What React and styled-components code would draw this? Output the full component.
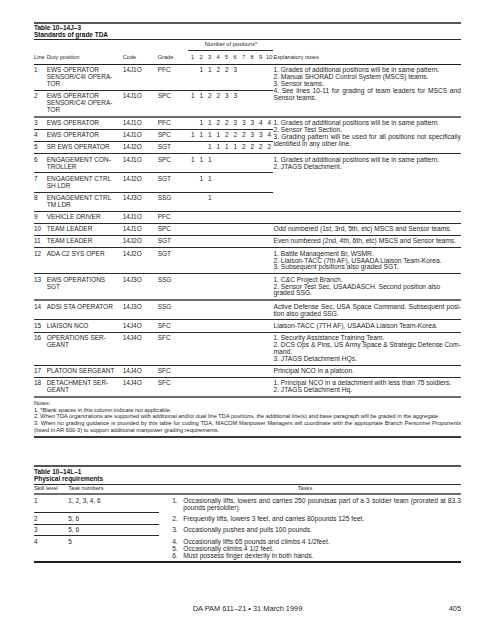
import React from 'react';
import styled, { createGlobalStyle } from 'styled-components';

const GlobalStyle = createGlobalStyle`
  html, body { margin: 0; padding: 0; background: #fff; }
  body {
    font-family: "Liberation Sans", Arial, Helvetica, sans-serif;
    color: #1e1e1e;
  }
`;

// Line | Duty position | Code | Grade | positions 1..10
const COLS = '12.7px 76px 35px 30.75px repeat(10, 8.5px)';
const THIN = '1px solid #2a2a2a';
const THICK = '2px solid #6e6e6e';

const duty1 = 'EWS OPERATOR\nSENSOR/C4I OPERA-\nTOR';

const groups = [
  {
    thick: true,
    rows: [
      { n: 1, duty: duty1, code: '14J1O', grade: 'PFC', pos: [null, 1, 1, 2, 2, 3] },
      { n: 2, duty: duty1, code: '14J1O', grade: 'SPC', pos: [1, 1, 2, 2, 3, 3] },
    ],
    notes: [
      { t: '1. Grades of additional positions will be in same pattern.' },
      { t: '2. Manual SHORAD Control System (MSCS) teams.' },
      { t: '3. Sensor teams.' },
      { t: '4. See lines 10-11 for grading of team leaders for MSCS and', j: true },
      { t: 'Sensor teams.' },
    ],
  },
  {
    rows: [
      { n: 3, duty: 'EWS OPERATOR', code: '14J1O', grade: 'PFC', pos: [null, 1, 1, 2, 2, 3, 3, 3, 4, 4] },
      { n: 4, duty: 'EWS OPERATOR', code: '14J1O', grade: 'SPC', pos: [1, 1, 1, 1, 2, 2, 2, 3, 3, 4] },
      { n: 5, duty: 'SR EWS OPERATOR', code: '14J2O', grade: 'SGT', pos: [null, null, 1, 1, 1, 1, 2, 2, 2, 2] },
    ],
    notes: [
      { t: '1. Grades of additional positions will be in same pattern.' },
      { t: '2. Sensor Test Section.' },
      { t: '3. Grading pattern will be used for all positions not specifically', j: true },
      { t: 'identified in any other line.' },
    ],
  },
  {
    rows: [
      { n: 6, duty: 'ENGAGEMENT CON-\nTROLLER', code: '14J1O', grade: 'SPC', pos: [1, 1, 1] },
      { n: 7, duty: 'ENGAGEMENT CTRL\nSH LDR', code: '14J2O', grade: 'SGT', pos: [null, 1, 1] },
      { n: 8, duty: 'ENGAGEMENT CTRL\nTM LDR', code: '14J3O', grade: 'SSG', pos: [null, null, 1] },
    ],
    notes: [
      { t: '1. Grades of additional positions will be in same pattern.' },
      { t: '2. JTAGS Detachment.' },
    ],
  },
  { rows: [{ n: 9, duty: 'VEHICLE DRIVER', code: '14J1O', grade: 'PFC' }], notes: [] },
  {
    rows: [{ n: 10, duty: 'TEAM LEADER', code: '14J1O', grade: 'SPC' }],
    notes: [{ t: 'Odd numbered (1st, 3rd, 5th, etc) MSCS and Sensor teams.' }],
  },
  {
    rows: [{ n: 11, duty: 'TEAM LEADER', code: '14J2O', grade: 'SGT' }],
    notes: [{ t: 'Even numbered (2nd, 4th, 6th, etc) MSCS and Sensor teams.' }],
  },
  {
    rows: [{ n: 12, duty: 'ADA C2 SYS OPER', code: '14J2O', grade: 'SGT' }],
    notes: [
      { t: '1. Battle Management Br, WSMR.' },
      { t: '2. Liaison-TACC (7th AF), USAADA Liaison Team-Korea.' },
      { t: '3. Subsequent positions also graded SGT.' },
    ],
  },
  {
    thick: true,
    rows: [{ n: 13, duty: 'EWS OPERATIONS\nSGT', code: '14J3O', grade: 'SSG' }],
    notes: [
      { t: '1. C&C Project Branch.' },
      { t: '2. Sensor Test Sec, USAADASCH. Second position also' },
      { t: 'graded SSG.' },
    ],
  },
  {
    rows: [{ n: 14, duty: 'ADSI STA OPERATOR', code: '14J3O', grade: 'SSG' }],
    notes: [
      { t: 'Active Defense Sec, USA Space Command. Subsequent posi-', j: true },
      { t: 'tion also graded SSG.' },
    ],
  },
  {
    rows: [{ n: 15, duty: 'LIAISON NCO', code: '14J4O', grade: 'SFC' }],
    notes: [{ t: 'Liaison-TACC (7TH AF), USAADA Liaison Team-Korea.' }],
  },
  {
    rows: [{ n: 16, duty: 'OPERATIONS SER-\nGEANT', code: '14J4O', grade: 'SFC' }],
    notes: [
      { t: '1. Security Assistance Training Team.' },
      { t: '2. DCS Ops & Plns, US Army Space & Strategic Defense Com-', j: true },
      { t: 'mand.' },
      { t: '3. JTAGS Detachment HQs.' },
    ],
  },
  {
    rows: [{ n: 17, duty: 'PLATOON SERGEANT', code: '14J4O', grade: 'SFC' }],
    notes: [{ t: 'Principal NCO in a platoon.' }],
  },
  {
    thick: true,
    rows: [{ n: 18, duty: 'DETACHMENT SER-\nGEANT', code: '14J4O', grade: 'SFC' }],
    notes: [
      { t: '1. Principal NCO in a detachment with less than 75 soldiers.' },
      { t: '2. JTAGS Detachment Hq.' },
    ],
  },
];

const footnotes = [
  { t: 'Notes:' },
  { t: '1. *Blank spaces in this column indicate not applicable.' },
  { t: '2. When TDA organizations are supported with additional and/or dual line TDA positions, the additional line(s) and base paragraph will be graded in the aggregate.' },
  { t: '3. When no grading guidance is provided by this table for coding TDA, MACOM Manpower Managers will coordinate with the appropriate Branch Personnel Proponents', j: true },
  { t: '(listed in AR 600-3) to support additional manpower grading requirements.' },
];

const physical = [
  {
    skill: '1',
    tasks: '1, 2, 3, 4, 6',
    items: [{ n: '1.', lines: [{ t: 'Occasionally lifts, lowers and carries 250 poundsas part of a 3 soldier team (prorated at 83.3', j: true }, { t: 'pounds persoldier).' }] }],
  },
  { skill: '2', tasks: '5, 6', items: [{ n: '2.', lines: [{ t: 'Frequently lifts, lowers 3 feet, and carries 80pounds 125 feet.' }] }] },
  { skill: '3', tasks: '5, 6', items: [{ n: '3.', lines: [{ t: 'Occasionally pushes and pulls 100 pounds.' }] }] },
  {
    skill: '4',
    tasks: '5',
    items: [
      { n: '4.', lines: [{ t: 'Occasionally lifts 65 pounds and climbs 4 1/2feet.' }] },
      { n: '5.', lines: [{ t: 'Occasionally climbs 4 1/2 feet.' }] },
      { n: '6.', lines: [{ t: 'Must possess finger dexterity in both hands.' }] },
    ],
  },
];

// a justified line is laid out word by word so it never wraps
const Line = ({ l }) =>
  l.j ? (
    <JustLine>
      {l.t.split(' ').map((w, i) => (
        <span key={i}>{w}</span>
      ))}
    </JustLine>
  ) : (
    <TextLine>{l.t}</TextLine>
  );

export default function App() {
  return (
    <Page>
      <GlobalStyle />

      <TableBlock>
        <Caption $pad="0.2px 0 1.6px">
          <div>Table 10–14J–3</div>
          <div>Standards of grade TDA</div>
        </Caption>

        <HeadGrid>
          <PosCaption>Number of positions*</PosCaption>
          <HeadLabel>Line</HeadLabel>
          <HeadLabel>Duty position</HeadLabel>
          <HeadLabel>Code</HeadLabel>
          <HeadLabel>Grade</HeadLabel>
          {Array.from({ length: 10 }, (_, i) => (
            <HeadLabel key={i} $center>{i + 1}</HeadLabel>
          ))}
          <HeadLabel>Explanatory notes</HeadLabel>
        </HeadGrid>

        {groups.map((g, gi) => (
          <Group key={gi} $thick={g.thick}>
            <Left>
              {g.rows.map((r) => (
                <Row key={r.n}>
                  <Cell>{r.n}</Cell>
                  <Duty>{r.duty}</Duty>
                  <Cell>{r.code}</Cell>
                  <Cell>{r.grade}</Cell>
                  {Array.from({ length: 10 }, (_, i) => (
                    <Pos key={i}>{r.pos && r.pos[i] != null ? r.pos[i] : ''}</Pos>
                  ))}
                </Row>
              ))}
            </Left>
            <Notes>
              {g.notes.map((l, i) => (
                <Line key={i} l={l} />
              ))}
            </Notes>
          </Group>
        ))}

        <Footnotes>
          {footnotes.map((l, i) => (
            <Line key={i} l={l} />
          ))}
        </Footnotes>
      </TableBlock>

      <TableBlock $gap="26.4px">
        <Caption $pad="1.4px 0 1.4px">
          <div>Table 10–14L–1</div>
          <div>Physical requirements</div>
        </Caption>

        <PhysHead>
          <span>Skill level</span>
          <span>Task numbers</span>
          <TasksLabel>Tasks</TasksLabel>
        </PhysHead>

        <PhysBody>
          {physical.map((r, ri) => {
            const last = ri === physical.length - 1;
            return (
              <PhysRow key={r.skill}>
                <PhysCell $last={last}>{r.skill}</PhysCell>
                <PhysCell $last={last}>{r.tasks}</PhysCell>
                <TaskCell>
                  {r.items.map((it) => (
                    <TaskItem key={it.n}>
                      <TaskNum>{it.n}</TaskNum>
                      <TaskText>
                        {it.lines.map((l, i) => (
                          <Line key={i} l={l} />
                        ))}
                      </TaskText>
                    </TaskItem>
                  ))}
                </TaskCell>
              </PhysRow>
            );
          })}
        </PhysBody>
      </TableBlock>

      <Footer>
        <span />
        <span>DA PAM 611–21 • 31 March 1999</span>
        <PageNo>405</PageNo>
      </Footer>
    </Page>
  );
}

const Page = styled.div`
  width: 427px;
  padding: 21.7px 34px 0;
`;

const TableBlock = styled.div`
  margin-top: ${(p) => p.$gap || '0'};
  border-top: 2px solid #555;
`;

const Caption = styled.div`
  font-weight: bold;
  font-size: 6.47px;
  line-height: 7px;
  padding: ${(p) => p.$pad};
  border-bottom: 1px solid #2a2a2a;
  color: #111;
`;

const HeadGrid = styled.div`
  display: grid;
  grid-template-columns: ${COLS} 1fr;
  font-size: 5.66px;
  line-height: 6.8px;
  padding-bottom: 2.6px;
  border-bottom: 1px solid #1e1e1e;
`;

const PosCaption = styled.div`
  grid-column: 5 / 15;
  grid-row: 1;
  text-align: center;
  padding: 0.9px 0 2.3px;
  border-bottom: 1px solid #2a2a2a;
`;

const HeadLabel = styled.div`
  grid-row: 2;
  margin-top: 2.9px;
  white-space: nowrap;
  text-align: ${(p) => (p.$center ? 'center' : 'left')};
`;

const Group = styled.div`
  display: flex;
  border-bottom: ${(p) => (p.$thick ? THICK : THIN)};
`;

const Left = styled.div`
  flex: none;
  width: 239.45px;
  display: flex;
  flex-direction: column;
`;

const Row = styled.div`
  display: grid;
  grid-template-columns: ${COLS};
  padding: 2.3px 0 2px;
  font-size: 6.47px;
  line-height: 6.9px;
  &:not(:last-child) {
    border-bottom: ${THIN};
  }
`;

const Cell = styled.div`
  white-space: nowrap;
`;

const Duty = styled.div`
  white-space: pre;
`;

const Pos = styled.div`
  text-align: center;
`;

const Notes = styled.div`
  flex: 1;
  min-width: 0;
  padding: 2.3px 0 2px;
  font-size: 6.7px;
  line-height: 6.9px;
`;

const TextLine = styled.div`
  white-space: nowrap;
`;

const JustLine = styled.div`
  display: flex;
  justify-content: space-between;
  white-space: nowrap;
`;

const Footnotes = styled.div`
  font-size: 5.66px;
  line-height: 6.8px;
  padding: 1.9px 0 2.6px;
  border-bottom: 2px solid #3a3a3a;
`;

const PhysHead = styled.div`
  display: grid;
  grid-template-columns: 34.3px 90.7px 1fr;
  font-size: 5.66px;
  line-height: 6.8px;
  padding: 0.9px 0 0.8px;
  border-bottom: ${THICK};
`;

const TasksLabel = styled.span`
  text-align: center;
  padding-right: 10px;
`;

const PhysBody = styled.div`
  border-bottom: 2px solid #1e1e1e;
`;

const PhysRow = styled.div`
  display: grid;
  grid-template-columns: 34.3px 90.7px 1fr;
  font-size: 6.47px;
  line-height: 7px;
`;

const PhysCell = styled.div`
  padding: 1.8px 0 2px;
  white-space: nowrap;
  border-bottom: ${(p) => (p.$last ? 'none' : THIN)};
`;

const TaskCell = styled.div`
  padding: 1.8px 0 2px 13.3px;
  font-size: 6.7px;
`;

const TaskItem = styled.div`
  display: flex;
`;

const TaskNum = styled.span`
  flex: none;
  width: 11px;
`;

const TaskText = styled.div`
  flex: 1;
  min-width: 0;
`;

const Footer = styled.div`
  display: grid;
  grid-template-columns: 1fr auto 1fr;
  margin-top: 41px;
  font-size: 7.4px;
  line-height: 9px;
  white-space: nowrap;
`;

const PageNo = styled.span`
  text-align: right;
`;
